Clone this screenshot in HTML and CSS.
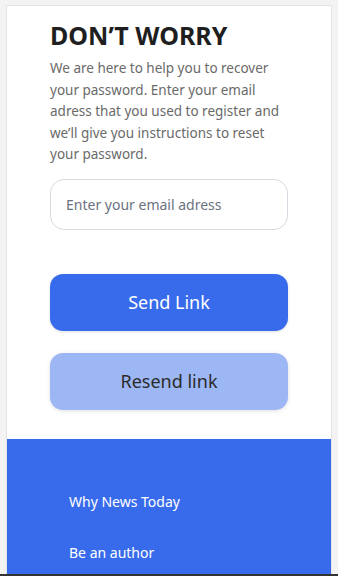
FILE: index.html
```html
<!DOCTYPE html>
<html lang="en">
<head>
<meta charset="utf-8">
<title>Forgot password</title>
<link rel="stylesheet" href="styles.css">
</head>
<body>
<div class="card">
  <main class="content">
    <h1 class="title">DON’T WORRY</h1>
    <p class="lead">We are here to help you to recover your password. Enter your email adress that you used to register and we’ll give you instructions to reset your password.</p>
    <input class="email" type="email" placeholder="Enter your email adress">
    <button class="btn btn-primary" type="button">Send Link</button>
    <button class="btn btn-secondary" type="button">Resend link</button>
  </main>
  <footer class="footer">
    <a class="footer-link" href="#">Why News Today</a>
    <a class="footer-link" href="#">Be an author</a>
  </footer>
</div>
</body>
</html>
```
FILE: styles.css
```css
html, body {
  margin: 0;
  padding: 0;
  background: #f3f3f3;
  font-family: "Noto Sans", "Open Sans", sans-serif;
}
body {
  padding: 5px 6px 0;
  height: 576px;
  box-sizing: border-box;
  overflow: hidden;
}
body::after {
  content: "";
  position: fixed;
  left: 0;
  right: 0;
  bottom: 0;
  height: 2px;
  background: #333;
}
.card {
  background: #fff;
  border: 1px solid #e4e4e4;
  border-bottom: none;
  height: 571px;
  box-sizing: border-box;
  display: flex;
  flex-direction: column;
}
.content {
  padding: 13px 43px 29px;
  display: flex;
  flex-direction: column;
}
.title {
  margin: 0;
  font-size: 25px;
  font-weight: 700;
  line-height: 32px;
  color: #1f1f1f;
  letter-spacing: 0;
}
.lead {
  margin: 7px 0 0;
  font-size: 13.5px;
  line-height: 21.6px;
  color: #6a6a6a;
}
.email {
  margin-top: 13px;
  height: 51px;
  box-sizing: border-box;
  border: 1px solid #d8dbe2;
  border-radius: 14px;
  padding: 0 15px;
  font-family: inherit;
  font-size: 14px;
  color: #333;
  outline: none;
}
.email::placeholder {
  color: #6b7280;
}
.btn {
  height: 57px;
  border: none;
  border-radius: 13px;
  font-family: inherit;
  font-size: 18px;
  cursor: pointer;
}
.btn-primary {
  margin-top: 44px;
  background: #386beb;
  color: #fff;
  box-shadow: 0 1px 3px rgba(0,0,0,0.12);
}
.btn-secondary {
  margin-top: 22px;
  background: #9db7f5;
  color: #2b2b2b;
  box-shadow: 0 1px 4px rgba(0,0,0,0.12);
}
.footer {
  background: #386beb;
  flex: 1;
  padding: 52px 62px 0;
  display: flex;
  flex-direction: column;
  gap: 30px;
}
.footer-link {
  color: #fff;
  text-decoration: none;
  font-size: 14px;
  line-height: 21px;
}
```
